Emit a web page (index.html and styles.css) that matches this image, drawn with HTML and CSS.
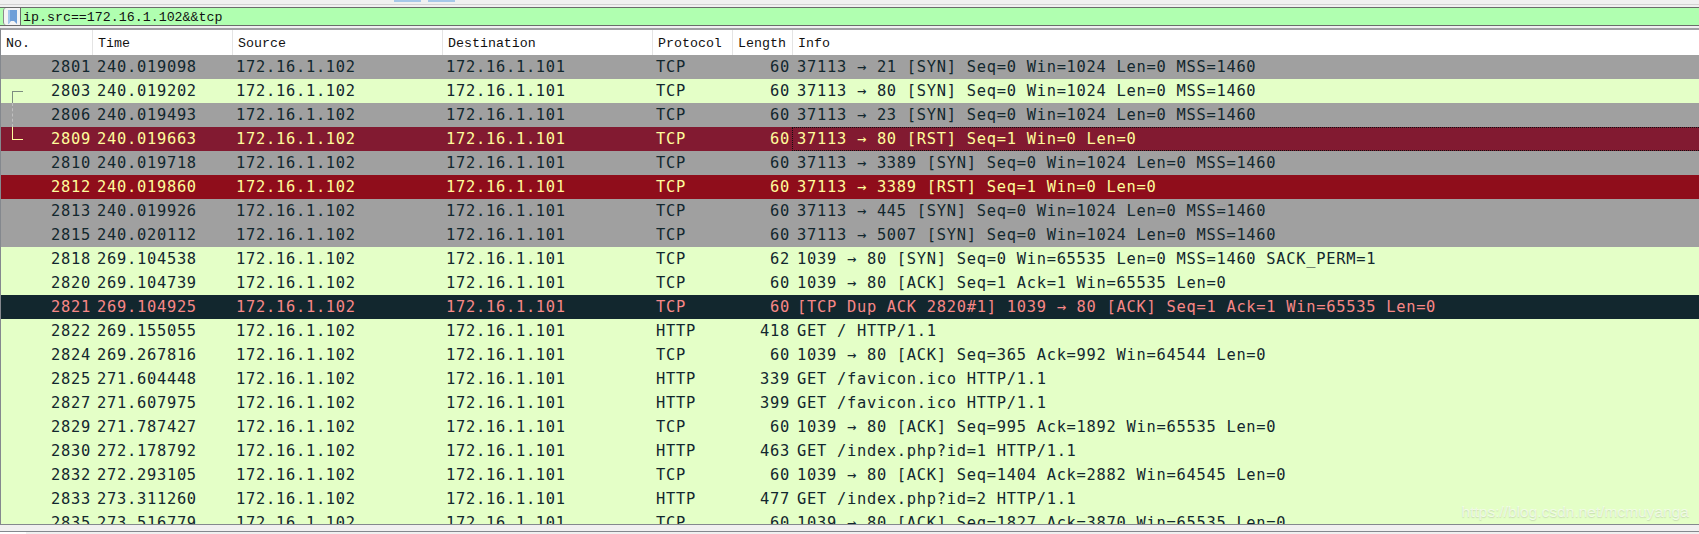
FILE: index.html
```html
<!DOCTYPE html>
<html lang="en">
<head>
<meta charset="utf-8">
<title>ip.src==172.16.1.102&amp;&amp;tcp</title>
<link rel="stylesheet" href="styles.css">
</head>
<body>
<div class="app">
  <div class="topbar"><span class="tabmark"></span><span class="tabmark"></span></div>
  <div class="filter">
    <span class="bookmark"><svg width="9" height="14" viewBox="0 0 9 14"><path d="M0 0H9V14L6 11H3L0 14Z" fill="#6f9fd8"/><path d="M0 0H2V13L0 14Z" fill="#a4c6ea"/></svg></span>
    <span class="filtertext">ip.src==172.16.1.102&amp;&amp;tcp</span>
  </div>
  <div class="list">
    <div class="head">
      <span class="hc">No.</span><span class="hc">Time</span><span class="hc">Source</span><span class="hc">Destination</span><span class="hc">Protocol</span><span class="hc">Length</span><span class="hc last">Info</span>
    </div>
    <div class="rows">
      <div class="row gray"><span class="no">2801</span><span>240.019098</span><span class="src">172.16.1.102</span><span class="dst">172.16.1.101</span><span class="pro">TCP</span><span class="len">60</span><span class="info">37113 → 21 [SYN] Seq=0 Win=1024 Len=0 MSS=1460</span></div>
      <div class="row green"><span class="no">2803</span><span>240.019202</span><span class="src">172.16.1.102</span><span class="dst">172.16.1.101</span><span class="pro">TCP</span><span class="len">60</span><span class="info">37113 → 80 [SYN] Seq=0 Win=1024 Len=0 MSS=1460</span><span class="rel-top"></span></div>
      <div class="row gray"><span class="no">2806</span><span>240.019493</span><span class="src">172.16.1.102</span><span class="dst">172.16.1.101</span><span class="pro">TCP</span><span class="len">60</span><span class="info">37113 → 23 [SYN] Seq=0 Win=1024 Len=0 MSS=1460</span><span class="rel-mid"></span></div>
      <div class="row sel"><span class="no">2809</span><span>240.019663</span><span class="src">172.16.1.102</span><span class="dst">172.16.1.101</span><span class="pro">TCP</span><span class="len">60</span><span class="info focus">37113 → 80 [RST] Seq=1 Win=0 Len=0</span><span class="rel-end"></span></div>
      <div class="row gray"><span class="no">2810</span><span>240.019718</span><span class="src">172.16.1.102</span><span class="dst">172.16.1.101</span><span class="pro">TCP</span><span class="len">60</span><span class="info">37113 → 3389 [SYN] Seq=0 Win=1024 Len=0 MSS=1460</span></div>
      <div class="row red"><span class="no">2812</span><span>240.019860</span><span class="src">172.16.1.102</span><span class="dst">172.16.1.101</span><span class="pro">TCP</span><span class="len">60</span><span class="info">37113 → 3389 [RST] Seq=1 Win=0 Len=0</span></div>
      <div class="row gray"><span class="no">2813</span><span>240.019926</span><span class="src">172.16.1.102</span><span class="dst">172.16.1.101</span><span class="pro">TCP</span><span class="len">60</span><span class="info">37113 → 445 [SYN] Seq=0 Win=1024 Len=0 MSS=1460</span></div>
      <div class="row gray"><span class="no">2815</span><span>240.020112</span><span class="src">172.16.1.102</span><span class="dst">172.16.1.101</span><span class="pro">TCP</span><span class="len">60</span><span class="info">37113 → 5007 [SYN] Seq=0 Win=1024 Len=0 MSS=1460</span></div>
      <div class="row green"><span class="no">2818</span><span>269.104538</span><span class="src">172.16.1.102</span><span class="dst">172.16.1.101</span><span class="pro">TCP</span><span class="len">62</span><span class="info">1039 → 80 [SYN] Seq=0 Win=65535 Len=0 MSS=1460 SACK_PERM=1</span></div>
      <div class="row green"><span class="no">2820</span><span>269.104739</span><span class="src">172.16.1.102</span><span class="dst">172.16.1.101</span><span class="pro">TCP</span><span class="len">60</span><span class="info">1039 → 80 [ACK] Seq=1 Ack=1 Win=65535 Len=0</span></div>
      <div class="row dark"><span class="no">2821</span><span>269.104925</span><span class="src">172.16.1.102</span><span class="dst">172.16.1.101</span><span class="pro">TCP</span><span class="len">60</span><span class="info">[TCP Dup ACK 2820#1] 1039 → 80 [ACK] Seq=1 Ack=1 Win=65535 Len=0</span></div>
      <div class="row green"><span class="no">2822</span><span>269.155055</span><span class="src">172.16.1.102</span><span class="dst">172.16.1.101</span><span class="pro">HTTP</span><span class="len">418</span><span class="info">GET / HTTP/1.1</span></div>
      <div class="row green"><span class="no">2824</span><span>269.267816</span><span class="src">172.16.1.102</span><span class="dst">172.16.1.101</span><span class="pro">TCP</span><span class="len">60</span><span class="info">1039 → 80 [ACK] Seq=365 Ack=992 Win=64544 Len=0</span></div>
      <div class="row green"><span class="no">2825</span><span>271.604448</span><span class="src">172.16.1.102</span><span class="dst">172.16.1.101</span><span class="pro">HTTP</span><span class="len">339</span><span class="info">GET /favicon.ico HTTP/1.1</span></div>
      <div class="row green"><span class="no">2827</span><span>271.607975</span><span class="src">172.16.1.102</span><span class="dst">172.16.1.101</span><span class="pro">HTTP</span><span class="len">399</span><span class="info">GET /favicon.ico HTTP/1.1</span></div>
      <div class="row green"><span class="no">2829</span><span>271.787427</span><span class="src">172.16.1.102</span><span class="dst">172.16.1.101</span><span class="pro">TCP</span><span class="len">60</span><span class="info">1039 → 80 [ACK] Seq=995 Ack=1892 Win=65535 Len=0</span></div>
      <div class="row green"><span class="no">2830</span><span>272.178792</span><span class="src">172.16.1.102</span><span class="dst">172.16.1.101</span><span class="pro">HTTP</span><span class="len">463</span><span class="info">GET /index.php?id=1 HTTP/1.1</span></div>
      <div class="row green"><span class="no">2832</span><span>272.293105</span><span class="src">172.16.1.102</span><span class="dst">172.16.1.101</span><span class="pro">TCP</span><span class="len">60</span><span class="info">1039 → 80 [ACK] Seq=1404 Ack=2882 Win=64545 Len=0</span></div>
      <div class="row green"><span class="no">2833</span><span>273.311260</span><span class="src">172.16.1.102</span><span class="dst">172.16.1.101</span><span class="pro">HTTP</span><span class="len">477</span><span class="info">GET /index.php?id=2 HTTP/1.1</span></div>
      <div class="row green"><span class="no">2835</span><span>273.516779</span><span class="src">172.16.1.102</span><span class="dst">172.16.1.101</span><span class="pro">TCP</span><span class="len">60</span><span class="info">1039 → 80 [ACK] Seq=1827 Ack=3870 Win=65535 Len=0</span></div>
    </div>
    <span class="watermark">https://blog.csdn.net/mcmuyanga</span>
  </div>
  <div class="statusgap"></div>
  <div class="pane"><span class="panetab"></span></div>
</div>
</body>
</html>
```
FILE: styles.css
```css
* { box-sizing: border-box; }
html, body { margin: 0; padding: 0; height: 100%; overflow: hidden; background: #f0f0f0; }
.app { width: 1699px; height: 534px; display: flex; flex-direction: column; overflow: hidden; }
.topbar { height: 5px; flex: none; background: #f0f0f0; border-bottom: 1px solid #d2d2d2; display: flex; gap: 7px; padding-left: 394px; align-items: flex-start; }
.tabmark { width: 27px; height: 2px; background: #a6c8e8; }
.filter { height: 19px; flex: none; margin-top: 2px; border-top: 1px solid #6b6b6b; border-bottom: 1px solid #6b6b6b; background: #b0ffb0; display: flex; align-items: center; }
.bookmark { width: 18px; height: 17px; margin-left: 3px; background: #f4f4f4; border-left: 1px solid #8a8a8a; border-right: 1px solid #6b6b6b; border-radius: 3px 0 0 3px; display: flex; align-items: center; justify-content: center; }
.filtertext { padding: 2px 0 0 2px; font: 13.3px "Liberation Mono", monospace; color: #111; }
.list { position: relative; margin-top: 2px; flex: none; height: 497px; border-top: 2px solid #a0a0a4; border-left: 1px solid #84888e; border-bottom: 1px solid #84888e; overflow: hidden; }
.head { height: 25px; background: #fff; display: grid; grid-template-columns: 92px 140px 210px 210px 80px 60px 1fr; }
.hc { border-right: 1px solid #e4e4e4; padding: 2px 0 0 5px; font: 13.3px/23px "Liberation Mono", monospace; color: #111; }
.hc.last { border-right: 0; }
.rows { display: flex; flex-direction: column; }
.row { position: relative; flex: none; height: 24px; display: grid; grid-template-columns: 91px 140px 210px 210px 80px 60px 1fr; font: 15.4px/24px "DejaVu Sans Mono", monospace; letter-spacing: 0.72px; white-space: pre; }
.no { text-align: right; padding-right: 1px; }
.row > span:nth-child(2) { padding-left: 5px; }
.src, .dst, .pro { padding-left: 4px; }
.len { text-align: right; padding-right: 2px; }
.info { padding-left: 5px; }
.gray { background: #a0a0a0; color: #12272e; }
.green { background: #e4ffc7; color: #12272e; }
.sel { background: #821a31; color: #fffc9c; }
.red { background: #8f0d1b; color: #fffc9c; }
.dark { background: #12272e; color: #f78787; }
.row .focus { padding-left: 4px; line-height: 22px; border: 1px dotted #111; border-right: 0; }
.rel-top, .rel-mid, .rel-end { position: absolute; left: 11px; width: 11px; }
.rel-top { top: 12px; bottom: 0; border-left: 1px solid #7c8c80; border-top: 1px solid #7c8c80; }
.rel-mid { top: 0; bottom: 0; border-left: 1px dashed #c0c0c0; }
.rel-end { top: 0; height: 13px; border-left: 1px solid #fffc9c; border-bottom: 1px solid #fffc9c; }
.watermark { position: absolute; right: 10px; bottom: 3px; font: 15.5px "Liberation Sans", sans-serif; color: rgba(255,255,255,0.62); text-shadow: 0 1px 1px rgba(120,120,120,0.25); }
.statusgap { height: 6px; flex: none; background: #f0f0f0; }
.pane { flex: 1; border-top: 1px solid #84888e; background: #f0f0f0; }
.panetab { display: block; width: 26px; height: 2px; background: #fff; }
```
